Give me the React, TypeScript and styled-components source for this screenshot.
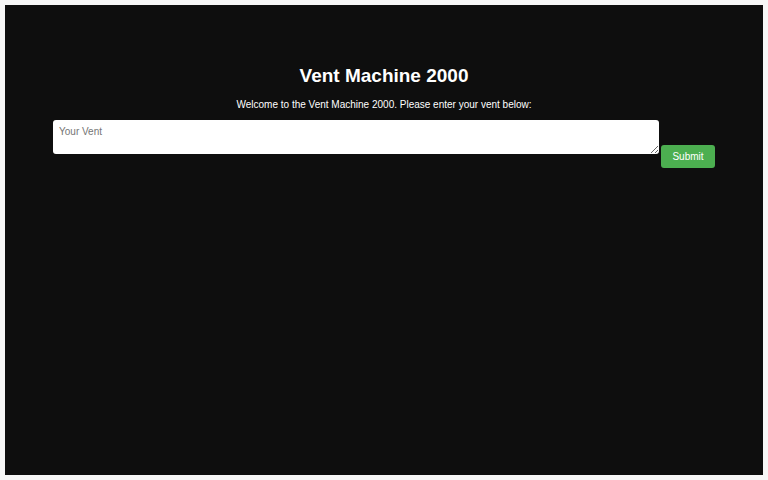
import React from "react";
import styled, { createGlobalStyle } from "styled-components";

const GlobalStyle = createGlobalStyle`
  * { box-sizing: border-box; }
  body {
    margin: 0;
    background: #f7f7f7;
    font-family: "Liberation Sans", Arial, sans-serif;
    color: #fff;
  }
`;

const Page = styled.main`
  min-height: 100vh;
  padding: 48px;
  border: 5px solid #f7f7f7;
  background: #0e0e0e;
  text-align: center;
`;

const Title = styled.h1`
  margin: 12px 0;
  font-size: 19px;
  line-height: 22px;
`;

const Intro = styled.p`
  margin: 0 0 10px;
  font-size: 10px;
  line-height: 11px;
`;

const VentForm = styled.form`
  display: flex;
  gap: 2px;
  align-items: flex-end;
`;

const VentInput = styled.textarea`
  flex: 1;
  min-width: 0;
  height: 34px;
  margin-bottom: 14px;
  padding: 6px;
  border: 0;
  border-radius: 3px;
  background: #fff;
  font: 10px/11px "Liberation Sans", Arial, sans-serif;

  &::placeholder { color: #757575; }
`;

const SubmitButton = styled.button`
  width: 54px;
  height: 23px;
  padding: 0;
  border: 0;
  border-radius: 3px;
  background: #4caf50;
  color: #fff;
  font: 10px/11px "Liberation Sans", Arial, sans-serif;
  cursor: pointer;
`;

export default function App() {
  return (
    <>
      <GlobalStyle />
      <Page>
        <Title>Vent Machine 2000</Title>
        <Intro>Welcome to the Vent Machine 2000. Please enter your vent below:</Intro>
        <VentForm onSubmit={(event: React.FormEvent) => event.preventDefault()}>
          <VentInput placeholder="Your Vent" aria-label="Your Vent" />
          <SubmitButton type="submit">Submit</SubmitButton>
        </VentForm>
      </Page>
    </>
  );
}
